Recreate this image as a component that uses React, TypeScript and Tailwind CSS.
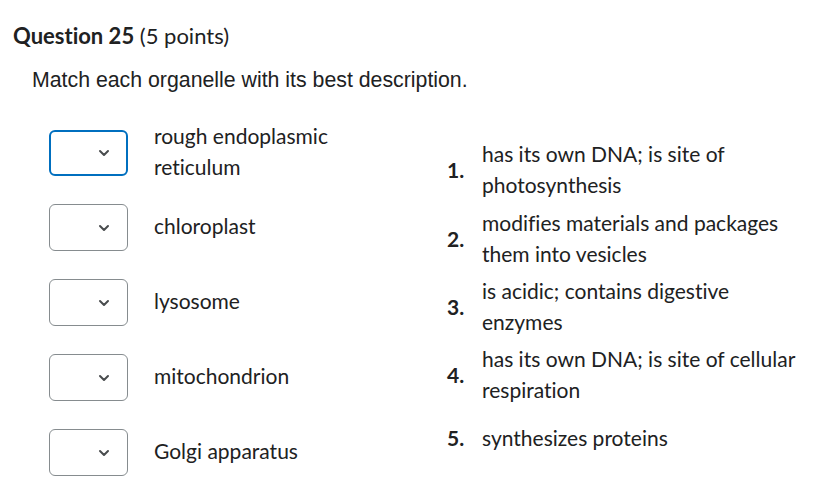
import React from "react";

const lato = { fontFamily: "Lato, 'Noto Sans', sans-serif" };

function Chevron() {
  return (
    <svg width="12" height="8" viewBox="0 0 12 8" fill="none">
      <path d="M2 2 L6 6 L10 2" stroke="#494c4e" strokeWidth="2" strokeLinecap="round" strokeLinejoin="round" />
    </svg>
  );
}

function Select({ focused }: { focused?: boolean }) {
  return (
    <div
      className={
        focused
          ? "w-[79px] h-[46px] mt-[4px] shrink-0 rounded-[6px] border-2 border-[#006fbf] bg-white flex items-center justify-end pr-[16px]"
          : "w-[79px] h-[47px] mt-[4px] shrink-0 rounded-[6px] border border-[#868c8f] bg-white flex items-center justify-end pr-[17px]"
      }
    >
      <Chevron />
    </div>
  );
}

const left = [
  "rough endoplasmic reticulum",
  "chloroplast",
  "lysosome",
  "mitochondrion",
  "Golgi apparatus",
];

const right = [
  { n: "1.", t: "has its own DNA; is site of photosynthesis", mt: "mt-0" },
  { n: "2.", t: "modifies materials and packages them into vesicles", mt: "mt-[7px]" },
  { n: "3.", t: "is acidic; contains digestive enzymes", mt: "mt-[6px]" },
  { n: "4.", t: "has its own DNA; is site of cellular respiration", mt: "mt-[6px]" },
  { n: "5.", t: "synthesizes proteins", mt: "mt-[17px]" },
];

export default function App() {
  return (
    <div className="w-[819px] h-[483px] bg-white text-[#202122] overflow-hidden pt-[21px] pl-[13px] [font-variant-ligatures:none]">
      <h2 className="text-[22px] leading-[30px]" style={lato}>
        <span className="font-bold">Question 25</span> <span className="font-normal">(5 points)</span>
      </h2>
      <p
        className="ml-[19px] mt-[14px] text-[21.3px] leading-[30px]"
        style={{ fontFamily: "'Liberation Sans', Arial, sans-serif" }}
      >
        Match each organelle with its best description.
      </p>
      <div className="flex mt-[18px] ml-[36px]" style={lato}>
        <div className="flex flex-col w-[320px]">
          {left.map((l, i) => (
            <div key={i} className="h-[75px] flex items-center gap-[26px]">
              <Select focused={i === 0} />
              <div className="w-[200px] text-[21px] leading-[31px]">{l}</div>
            </div>
          ))}
        </div>
        <div className="flex flex-col ml-[78px] pt-[25px]">
          {right.map((r, i) => (
            <div key={i} className={"flex items-center " + r.mt}>
              <div className="w-[35px] shrink-0 font-bold text-[21px] leading-[31px]">{r.n}</div>
              <div className="w-[322px] text-[21px] leading-[31px]">{r.t}</div>
            </div>
          ))}
        </div>
      </div>
    </div>
  );
}
